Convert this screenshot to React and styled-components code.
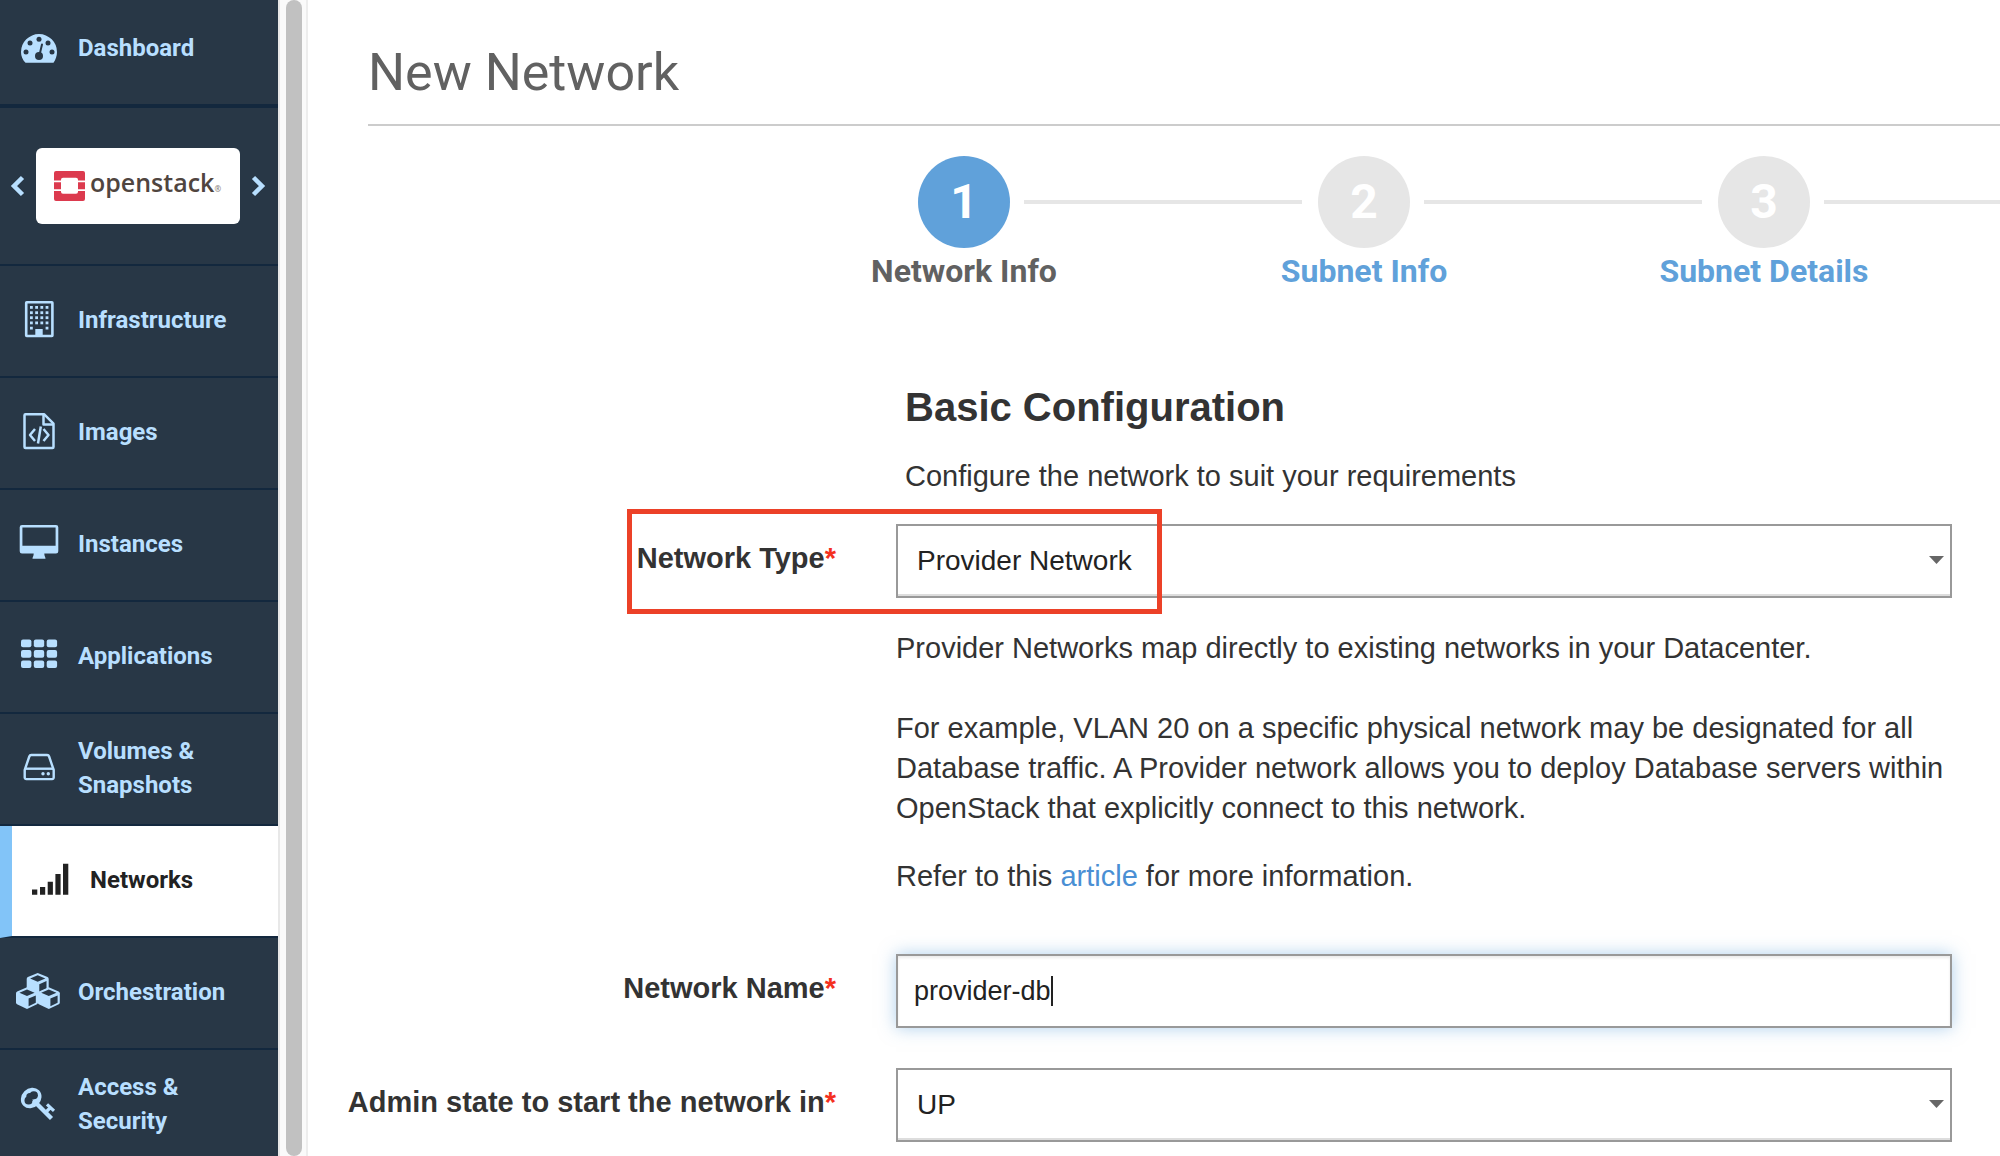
import React from "react";
import styled, { createGlobalStyle } from "styled-components";

const GlobalStyle = createGlobalStyle`
  * { box-sizing: border-box; }
  body {
    margin: 0;
    background: #fff;
    color: #333;
    font-family: "Liberation Sans", Arial, sans-serif;
    font-size: 29px;
    line-height: 40px;
  }
`;

const Shell = styled.div`
  display: flex;
  height: 100vh;
  overflow: hidden;
`;

/* ---------- sidebar ---------- */

const Sidebar = styled.nav`
  flex: 0 0 278px;
  overflow: hidden;
  background: #283746;
  font-family: Roboto, sans-serif;
`;

const NavItem = styled.a`
  display: flex;
  align-items: center;
  gap: 15px;
  height: ${(p) => (p.$first ? "108px" : "112px")};
  padding: 0 15px ${(p) => (p.$first ? "8px" : "2px")};
  border-bottom: ${(p) => (p.$first ? "4px" : "2px")} solid #13283e;
  border-left: ${(p) => (p.$active ? "12px solid #82c4f8" : "0")};
  background: ${(p) => (p.$active ? "#fff" : "transparent")};
  color: ${(p) => (p.$active ? "#222" : "#b8dfff")};
  font-size: 24px;
  font-weight: 700;
  line-height: 34px;
  text-decoration: none;
`;

const NavIcon = styled.svg`
  flex: 0 0 48px;
  height: 48px;
`;

const CloudSwitcher = styled.div`
  display: flex;
  align-items: center;
  justify-content: space-between;
  height: 158px;
  padding: 0 12px 0 10px;
  border-bottom: 2px solid #13283e;
`;

const ArrowButton = styled.button`
  width: 16px;
  height: 24px;
  padding: 0;
  border: 0;
  background: none;
  color: #b8dfff;
`;

const CloudCard = styled.div`
  display: flex;
  align-items: center;
  gap: 5px;
  width: 204px;
  height: 76px;
  padding: 0 0 0 18px;
  border-radius: 6px;
  background: #fff;
`;

const CloudMark = styled.svg`
  flex: 0 0 31px;
  height: 30px;
`;

const CloudName = styled.span`
  padding-bottom: 2px;
  color: #50453f;
  font-family: "Open Sans", sans-serif;
  font-size: 25px;
  font-weight: 600;
  line-height: 36px;
`;

const Registered = styled.span`
  color: #8a8380;
  font-size: 8px;
`;

const ScrollTrack = styled.div`
  flex: 0 0 30px;
  padding: 0 4px 0 6px;
  border-left: 2px solid #e8e8e8;
  border-right: 2px solid #ededed;
  background: #fafafa;
`;

const ScrollThumb = styled.div`
  width: 16px;
  height: 100%;
  border-radius: 8px;
  background: #c1c1c1;
`;

/* ---------- main ---------- */

const Main = styled.main`
  flex: 1;
  min-width: 0;
  overflow: hidden;
`;

const PageHeader = styled.header`
  margin-left: 60px;
  padding: 43px 0 21px;
  border-bottom: 2px solid #ccc;
`;

const PageTitle = styled.h1`
  margin: 0;
  color: #616161;
  font-family: Roboto, sans-serif;
  font-size: 52px;
  font-weight: 400;
  line-height: 60px;
`;

const Steps = styled.ol`
  display: flex;
  margin: 0;
  padding: 30px 0 0 610px;
  list-style: none;
`;

const StepItem = styled.li`
  display: flex;
  flex: ${(p) => (p.$last ? "1 0 auto" : "0 0 auto")};
`;

const StepLink = styled.a`
  display: flex;
  flex-direction: column;
  align-items: center;
  gap: 3px;
  width: 92px;
  color: ${(p) => (p.$current ? "#616161" : "#60a1da")};
  font-family: Roboto, sans-serif;
  font-size: 32px;
  font-weight: 700;
  text-decoration: none;
  white-space: nowrap;
`;

const StepNumber = styled.span`
  display: flex;
  align-items: center;
  justify-content: center;
  width: 92px;
  height: 92px;
  border-radius: 50%;
  background: ${(p) => (p.$current ? "#60a1da" : "#e6e6e6")};
  color: #fff;
  font-size: 48px;
`;

const Connector = styled.span`
  flex: 1 0 278px;
  height: 4px;
  margin: 44px 16px 0 14px;
  background: #e6e6e6;
`;

const Form = styled.form`
  display: grid;
  grid-template-columns: 528px minmax(0, 1fr);
  column-gap: 60px;
  padding-right: 48px;
`;

const Intro = styled.div`
  grid-column: 2;
  padding: 92px 0 28px 9px;
`;

const SectionTitle = styled.h2`
  margin: 0 0 25px;
  font-size: 40px;
  font-weight: 700;
  line-height: 48px;
`;

const Text = styled.p`
  margin: 0;
`;

const FieldLabel = styled.label`
  padding-top: 14px;
  font-weight: 700;
  text-align: right;
`;

const Required = styled.span`
  color: #f4301f;
`;

const Field = styled.div`
  position: relative;
  height: 74px;
  margin-bottom: ${(p) => (p.$tight ? "30px" : "40px")};
`;

const Select = styled.select`
  width: 100%;
  height: 100%;
  padding: 0 19px;
  border: 2px solid #999;
  border-radius: 0;
  outline: 0;
  background: #fff;
  box-shadow: inset 0 -2px 0 #ddd;
  color: #222;
  font: inherit;
  font-size: 28px;
  appearance: none;
`;

const SelectArrow = styled.svg`
  position: absolute;
  top: 32px;
  right: 8px;
  width: 15px;
  height: 8px;
  pointer-events: none;
`;

const InputBox = styled.div`
  display: flex;
  align-items: center;
  height: 100%;
  padding: 0 16px;
  border: 2px solid #999;
  box-shadow: inset 0 2px 3px rgba(0, 0, 0, 0.08), 0 0 16px rgba(96, 161, 218, 0.5);
`;

const Input = styled.input`
  field-sizing: content;
  max-width: 100%;
  padding: 0;
  border: 0;
  outline: 0;
  background: none;
  color: #222;
  font: inherit;
  font-size: 27px;
  caret-color: transparent;
`;

const Caret = styled.span`
  width: 2px;
  height: 30px;
  background: #222;
`;

const Help = styled.div`
  grid-column: 2;
  display: grid;
  padding-bottom: 58px;
`;

const Example = styled(Text)`
  margin: 40px 0 28px;
`;

const ArticleLink = styled.a`
  color: #4a8fd4;
  text-decoration: none;
`;

const Highlight = styled.div`
  position: absolute;
  top: -15px;
  left: -269px;
  width: 535px;
  height: 105px;
  border: 5px solid #ec4128;
  pointer-events: none;
`;

/* ---------- icons ---------- */

const GaugeIcon = () => (
  <>
    <path fill="currentColor" d="M10.5 38.7C7.5 36 6 32 6 28a18 18 0 0 1 36 0c0 4-1.5 8-3.5 10.7z" />
    <g fill="#283746">
      <circle cx="11" cy="28" r="2.5" />
      <circle cx="15" cy="19" r="2.5" />
      <circle cx="24" cy="15.3" r="2.5" />
      <circle cx="33" cy="19" r="2.5" />
      <circle cx="37" cy="28" r="2.5" />
      <circle cx="24" cy="32" r="4" />
    </g>
    <path stroke="#283746" strokeWidth="2" strokeLinecap="round" d="M24.5 31L27 20.5" />
  </>
);

const BuildingIcon = () => (
  <>
    <rect x="11.2" y="6.2" width="26.2" height="33.8" rx="0.5" fill="none" stroke="currentColor" strokeWidth="2.6" />
    {[10, 15.3, 20.3, 25.5].map((y) =>
      [15, 20.2, 25.4, 30.6].map((x) => (
        <rect key={`${x}-${y}`} x={x} y={y} width="2.8" height="2.8" fill="currentColor" />
      ))
    )}
    <path fill="currentColor" d="M15 30.7h2.8v2.8H15zM30.6 30.7h2.8v2.8h-2.8zM20.3 33h7.4v8h-7.4z" />
  </>
);

const CodeFileIcon = () => (
  <g fill="none" stroke="currentColor" strokeWidth="2.5" strokeLinejoin="round">
    <path d="M10.5 6.2H29l9.5 9.5V39a1 1 0 0 1-1 1h-27a1 1 0 0 1-1-1V7.2a1 1 0 0 1 1-1z" />
    <path d="M28.5 6v10.5h10" />
    <path d="M20 21l-5 6 5 6M28.5 21l5 6-5 6M25.8 18.5l-2.8 17" />
  </g>
);

const DesktopIcon = () => (
  <path
    fill="currentColor"
    fillRule="evenodd"
    d="M7 5h34a2.3 2.3 0 0 1 2.3 2.3v23.9a2.3 2.3 0 0 1-2.3 2.3H29.3c0 3 1.2 3.5 1.2 5.2h-13c0-1.7 1.2-2.2 1.2-5.2H7a2.3 2.3 0 0 1-2.3-2.3V7.3A2.3 2.3 0 0 1 7 5zm.4 2.4v18.3h33.2V7.4z"
  />
);

const GridIcon = () => (
  <g fill="currentColor">
    {[7.6, 18, 28.4].map((y) =>
      [6, 18.8, 31.7].map((x) => (
        <rect key={`${x}-${y}`} x={x} y={y} width="10.4" height="7.7" rx="2" />
      ))
    )}
  </g>
);

const DriveIcon = () => (
  <g fill="none" stroke="currentColor" strokeWidth="2.4">
    <path strokeLinejoin="round" d="M9.7 26l4.6-13.5q.5-1.5 2-1.5h15.8q1.5 0 2 1.5L38.7 26v7.5a1.6 1.6 0 0 1-1.6 1.6H11.3a1.6 1.6 0 0 1-1.6-1.6z" />
    <path d="M10 24.7h28.4" />
    <circle cx="28" cy="29.8" r="1.7" fill="currentColor" stroke="none" />
    <circle cx="33.3" cy="29.8" r="1.7" fill="currentColor" stroke="none" />
  </g>
);

const SignalIcon = () => (
  <path
    fill="currentColor"
    d="M5 33.5h5.3v5.2H5zM13 31h5.2v7.7H13zM20.7 25.7h5.2v13h-5.2zM28.4 18h5.2v20.7h-5.2zM36 7.7h5.3v31H36z"
  />
);

const Cube = ({ x, y }) => (
  <g transform={`translate(${x} ${y})`}>
    <path fill="currentColor" d="M11 0l9.8 4.1q1.2.6 1.2 1.9v9.2q0 1.2-1 1.8L11 21.8 1 17q-1-.6-1-1.8V6q0-1.3 1.2-1.9z" />
    <path fill="#283746" d="M11 2.2l7.6 3.2L11 8.7 3.4 5.4zM12.6 11.2l7.2-3.1v7.3l-7.2 3.5z" />
  </g>
);

const CubesIcon = () => (
  <>
    <Cube x={11.7} y={5} />
    <Cube x={1} y={19.3} />
    <Cube x={22.8} y={19.3} />
  </>
);

const KeyIcon = () => (
  <>
    <ellipse cx="16.2" cy="18" rx="11" ry="9.6" fill="currentColor" transform="rotate(-45 16.2 18)" />
    <g fill="#283746">
      <circle cx="18.8" cy="15.3" r="4.1" />
      <circle cx="13.6" cy="20.5" r="4.1" />
      <circle cx="14.8" cy="16.6" r="3.5" />
    </g>
    <g fill="none" stroke="currentColor">
      <path strokeWidth="4.4" d="M18.5 20.5l18 18" />
      <path strokeWidth="3.2" d="M30 33l5.5-5.5M32 24.3l7 6.5" />
    </g>
  </>
);

const ICONS = {
  gauge: GaugeIcon,
  building: BuildingIcon,
  code: CodeFileIcon,
  desktop: DesktopIcon,
  grid: GridIcon,
  drive: DriveIcon,
  signal: SignalIcon,
  cubes: CubesIcon,
  key: KeyIcon,
};

const NAV = [
  { label: "Infrastructure", icon: "building" },
  { label: "Images", icon: "code" },
  { label: "Instances", icon: "desktop" },
  { label: "Applications", icon: "grid" },
  { label: "Volumes & Snapshots", icon: "drive" },
  { label: "Networks", icon: "signal", active: true },
  { label: "Orchestration", icon: "cubes" },
  { label: "Access & Security", icon: "key" },
];

const STEPS = ["Network Info", "Subnet Info", "Subnet Details"];

function NavLink({ label, icon, active, first }) {
  const Icon = ICONS[icon];
  return (
    <NavItem href="#" $active={active} $first={first} aria-current={active ? "page" : undefined}>
      <NavIcon viewBox="0 0 48 48" aria-hidden="true">
        <Icon />
      </NavIcon>
      <span>{label}</span>
    </NavItem>
  );
}

function Chevron({ d }) {
  return (
    <svg width="16" height="24" viewBox="0 0 16 24" aria-hidden="true">
      <path d={d} fill="none" stroke="currentColor" strokeWidth="4.5" />
    </svg>
  );
}

function SelectField({ id, value, options, tight, children }) {
  return (
    <Field $tight={tight}>
      <Select id={id} defaultValue={value}>
        {options.map((o) => (
          <option key={o}>{o}</option>
        ))}
      </Select>
      <SelectArrow viewBox="0 0 15 8" aria-hidden="true">
        <path d="M0 0h15L7.5 8z" fill="#666" />
      </SelectArrow>
      {children}
    </Field>
  );
}

export default function App() {
  return (
    <>
      <GlobalStyle />
      <Shell>
        <Sidebar>
          <NavLink label="Dashboard" icon="gauge" first />
          <CloudSwitcher>
            <ArrowButton type="button" aria-label="Previous cloud">
              <Chevron d="M12.5 3.5L4 12l8.5 8.5" />
            </ArrowButton>
            <CloudCard>
              <CloudMark viewBox="0 0 31 30" aria-hidden="true">
                <g fill="#dc3a4e">
                  <path d="M2 0h27a2 2 0 0 1 2 2v7.5h-7V8.7a2 2 0 0 0-2-2H9a2 2 0 0 0-2 2v.8H0V2a2 2 0 0 1 2-2z" />
                  <path d="M0 11.3h7v7H0zM24 11.3h7v7h-7z" />
                  <path d="M2 30h27a2 2 0 0 0 2-2v-8h-7v.8a2 2 0 0 1-2 2H9a2 2 0 0 1-2-2V20H0v8a2 2 0 0 0 2 2z" />
                </g>
              </CloudMark>
              <CloudName>
                openstack<Registered>®</Registered>
              </CloudName>
            </CloudCard>
            <ArrowButton type="button" aria-label="Next cloud">
              <Chevron d="M3.5 3.5L12 12l-8.5 8.5" />
            </ArrowButton>
          </CloudSwitcher>
          {NAV.map((item) => (
            <NavLink key={item.label} {...item} />
          ))}
        </Sidebar>
        <ScrollTrack>
          <ScrollThumb />
        </ScrollTrack>
        <Main>
          <PageHeader>
            <PageTitle>New Network</PageTitle>
          </PageHeader>
          <Steps>
            {STEPS.map((label, i) => (
              <StepItem key={label} $last={i === STEPS.length - 1}>
                <StepLink href="#" $current={i === 0}>
                  <StepNumber $current={i === 0}>{i + 1}</StepNumber>
                  {label}
                </StepLink>
                <Connector />
              </StepItem>
            ))}
          </Steps>
          <Form>
            <Intro>
              <SectionTitle>Basic Configuration</SectionTitle>
              <Text>Configure the network to suit your requirements</Text>
            </Intro>

            <FieldLabel htmlFor="type">
              Network Type<Required>*</Required>
            </FieldLabel>
            <SelectField id="type" value="Provider Network" options={["Provider Network"]} tight>
              <Highlight />
            </SelectField>

            <Help>
              <Text>Provider Networks map directly to existing networks in your Datacenter.</Text>
              <Example>
                For example, VLAN 20 on a specific physical network may be designated for all Database traffic. A
                Provider network allows you to deploy Database servers within OpenStack that explicitly connect to this
                network.
              </Example>
              <Text>
                Refer to this <ArticleLink href="#">article</ArticleLink> for more information.
              </Text>
            </Help>

            <FieldLabel htmlFor="name">
              Network Name<Required>*</Required>
            </FieldLabel>
            <Field>
              <InputBox>
                <Input id="name" type="text" defaultValue="provider-db" />
                <Caret />
              </InputBox>
            </Field>

            <FieldLabel htmlFor="state">
              Admin state to start the network in<Required>*</Required>
            </FieldLabel>
            <SelectField id="state" value="UP" options={["UP", "DOWN"]} />
          </Form>
        </Main>
      </Shell>
    </>
  );
}
